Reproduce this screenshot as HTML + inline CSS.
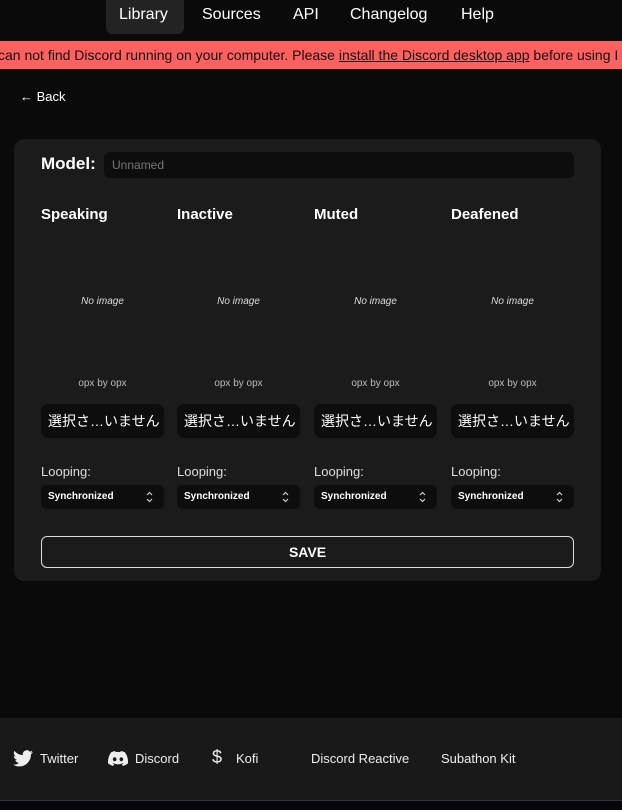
<!DOCTYPE html>
<html><head><meta charset="utf-8"><style>
*{box-sizing:border-box;margin:0;padding:0}
body{width:622px;height:810px;background:#0a0a0a;color:#fff;font-family:"Liberation Sans","Noto Sans CJK JP",sans-serif;position:relative;overflow:hidden}
.nav a{position:absolute;top:5px;font-size:16px;color:#fff;line-height:20px}
.tab{position:absolute;left:106px;top:-6px;width:78px;height:40px;background:#232323;border-radius:6px}
.banner{position:absolute;top:41px;left:0;width:622px;height:28px;background:#ff6161;color:#111;font-size:14px;line-height:28px;white-space:nowrap}
.banner span{position:absolute;left:-2px}
.back{position:absolute;left:20px;top:89px;font-size:13px}
.card{position:absolute;left:14px;top:139px;width:587px;height:442px;background:#1b1b1b;border-radius:10px}
.model{position:absolute;left:41px;top:154px;font-size:17px;font-weight:bold}
.minput{position:absolute;left:104px;top:152px;width:470px;height:26px;background:#0d0d0d;border-radius:6px;color:#777;font-size:12px;line-height:26px;padding-left:8px}
.h{position:absolute;top:206px;font-size:15px;font-weight:bold}
.ni{position:absolute;top:296px;width:123px;text-align:center;font-size:10px;font-style:italic;color:#ddd}
.px{position:absolute;top:378px;width:123px;text-align:center;font-size:10px;color:#bbb}
.sel{position:absolute;top:404px;width:123px;height:34px;background:#0d0d0d;border-radius:7px;font-size:14px;line-height:34px;padding-left:7px;white-space:nowrap}
.lp{position:absolute;top:464px;font-size:13px;color:#ddd}
.sy{position:absolute;top:485px;width:123px;height:24px;background:#0d0d0d;border-radius:6px;font-size:10px;font-weight:bold;line-height:24px;padding-left:7px}
.sy svg{position:absolute;right:11px;top:6px}
.save{position:absolute;left:41px;top:536px;width:533px;height:32px;border:1px solid #ddd;border-radius:6px;text-align:center;line-height:30px;font-size:14px;font-weight:bold}
.foot{position:absolute;left:0;top:718px;width:622px;height:82px;background:#191919}
.bot{position:absolute;left:0;top:800px;width:622px;height:10px;background:#06060c;border-top:1px solid #333}
.fl{position:absolute;top:751px;font-size:13px;color:#eee}
</style></head><body>
<div class="tab"></div>
<div class="nav"><a style="left:119px">Library</a><a style="left:202px">Sources</a><a style="left:293px">API</a><a style="left:350px">Changelog</a><a style="left:461px">Help</a></div>
<div class="banner"><span>can not find Discord running on your computer. Please <u>install the Discord desktop app</u> before using I</span></div>
<div class="back">← Back</div>
<div class="card"></div>
<div class="model">Model:</div>
<div class="minput">Unnamed</div>

<div class="h" style="left:41px">Speaking</div><div class="h" style="left:177px">Inactive</div><div class="h" style="left:314px">Muted</div><div class="h" style="left:451px">Deafened</div>
<div class="ni" style="left:41px">No image</div><div class="ni" style="left:177px">No image</div><div class="ni" style="left:314px">No image</div><div class="ni" style="left:451px">No image</div>
<div class="px" style="left:41px">opx by opx</div><div class="px" style="left:177px">opx by opx</div><div class="px" style="left:314px">opx by opx</div><div class="px" style="left:451px">opx by opx</div>
<div class="sel" style="left:41px">選択さ…いません</div><div class="sel" style="left:177px">選択さ…いません</div><div class="sel" style="left:314px">選択さ…いません</div><div class="sel" style="left:451px">選択さ…いません</div>
<div class="lp" style="left:41px">Looping:</div><div class="lp" style="left:177px">Looping:</div><div class="lp" style="left:314px">Looping:</div><div class="lp" style="left:451px">Looping:</div>
<div class="sy" style="left:41px">Synchronized<svg width="7" height="12" viewBox="0 0 7 12"><path d="M1 4l2.5-2.5L6 4M1 8l2.5 2.5L6 8" stroke="#ccc" fill="none" stroke-width="1.2"/></svg></div>
<div class="sy" style="left:177px">Synchronized<svg width="7" height="12" viewBox="0 0 7 12"><path d="M1 4l2.5-2.5L6 4M1 8l2.5 2.5L6 8" stroke="#ccc" fill="none" stroke-width="1.2"/></svg></div>
<div class="sy" style="left:314px">Synchronized<svg width="7" height="12" viewBox="0 0 7 12"><path d="M1 4l2.5-2.5L6 4M1 8l2.5 2.5L6 8" stroke="#ccc" fill="none" stroke-width="1.2"/></svg></div>
<div class="sy" style="left:451px">Synchronized<svg width="7" height="12" viewBox="0 0 7 12"><path d="M1 4l2.5-2.5L6 4M1 8l2.5 2.5L6 8" stroke="#ccc" fill="none" stroke-width="1.2"/></svg></div>
<div class="save">SAVE</div>

<div class="foot"></div>
<svg style="position:absolute;left:13px;top:750px" width="20" height="17" viewBox="0 0 24 20"><path fill="#eee" d="M24 2.4a10 10 0 0 1-2.8.8A5 5 0 0 0 23.3.5a10 10 0 0 1-3.1 1.2A4.9 4.9 0 0 0 11.8 6 14 14 0 0 1 1.7.9a4.9 4.9 0 0 0 1.5 6.6A4.9 4.9 0 0 1 1 6.9a4.9 4.9 0 0 0 3.9 4.8 5 5 0 0 1-2.2.1 4.9 4.9 0 0 0 4.6 3.4A9.9 9.9 0 0 1 0 17.3 14 14 0 0 0 7.5 19.5c9.1 0 14-7.5 14-14v-.6A10 10 0 0 0 24 2.4z"/></svg>
<div class="fl" style="left:40px">Twitter</div>
<svg style="position:absolute;left:108px;top:751px" width="20" height="15" viewBox="0 0 24 18"><path fill="#eee" d="M20.3 1.5A20 20 0 0 0 15.4 0l-.6 1.3a18 18 0 0 0-5.6 0L8.6 0A20 20 0 0 0 3.7 1.5C.6 6.1-.3 10.6.1 15a20 20 0 0 0 6 3l1.3-2.1a13 13 0 0 1-2-1l.5-.4a14 14 0 0 0 12.2 0l.5.4a13 13 0 0 1-2 1L17.900 18a20 20 0 0 0 6-3c.5-5.1-.8-9.6-3.6-13.5zM8 12.3c-1.2 0-2.2-1.1-2.2-2.4S6.8 7.5 8 7.5s2.2 1.1 2.2 2.4-1 2.4-2.2 2.4zm8 0c-1.2 0-2.2-1.1-2.2-2.4s1-2.4 2.2-2.4 2.2 1.1 2.2 2.4-1 2.4-2.2 2.4z"/></svg>
<div class="fl" style="left:135px">Discord</div>
<div class="fl" style="left:212px;top:747px;font-size:18px">$</div>
<div class="fl" style="left:236px">Kofi</div>
<div class="fl" style="left:311px">Discord Reactive</div>
<div class="fl" style="left:441px">Subathon Kit</div>
<div class="bot"></div>
</body></html>
